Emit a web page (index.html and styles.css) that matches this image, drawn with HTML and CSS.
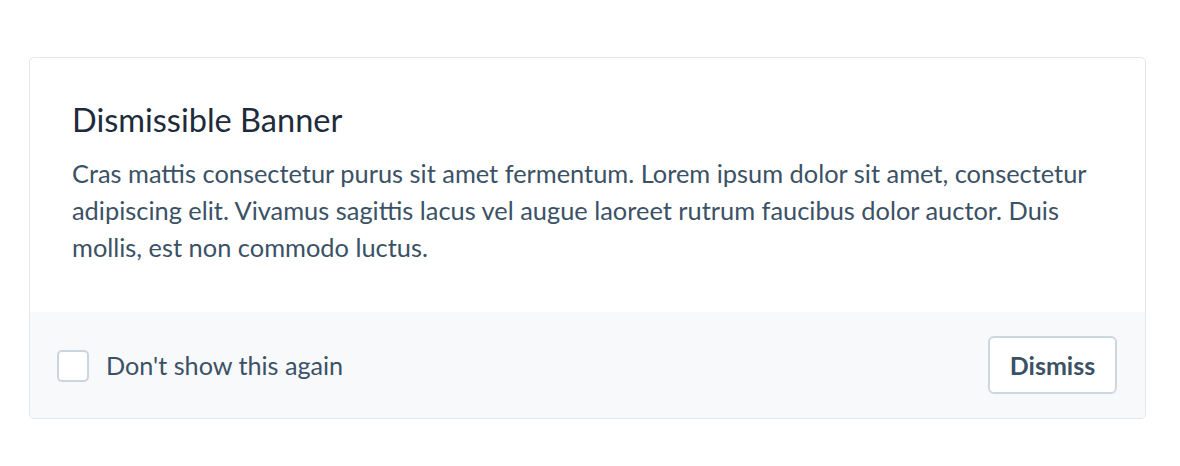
FILE: index.html
```html
<!DOCTYPE html>
<html>
<head>
<meta charset="utf-8">
<link rel="stylesheet" href="styles.css">
</head>
<body>
<div class="banner">
  <div class="banner-body">
    <h2 class="banner-title">Dismissible Banner</h2>
    <p class="banner-text">Cras mattis consectetur purus sit amet fermentum. Lorem ipsum dolor sit amet, consectetur adipiscing elit. Vivamus sagittis lacus vel augue laoreet rutrum faucibus dolor auctor. Duis mollis, est non commodo luctus.</p>
  </div>
  <div class="banner-footer">
    <label class="check">
      <span class="check-box"></span>
      <span class="check-label">Don't show this again</span>
    </label>
    <button class="btn">Dismiss</button>
  </div>
</div>
</body>
</html>
```

FILE: styles.css
```css
html, body {
  margin: 0;
  background: #ffffff;
}
body {
  padding: 57px 34px 0 29px;
  font-family: Lato, "Noto Sans", sans-serif;
}
.banner {
  border: 1px solid #e2e7eb;
  border-radius: 5px;
  overflow: hidden;
  background: #ffffff;
}
.banner-body {
  padding: 42px 43px 46px 42px;
}
.banner-title {
  margin: 0 0 15px 0;
  font-size: 32.5px;
  font-weight: 400;
  line-height: 40px;
  color: #1d2b3a;
}
.banner-text {
  margin: 0;
  font-size: 25.4px;
  line-height: 37px;
  color: #3b5166;
}
.banner-footer {
  background: #f7f9fb;
  display: flex;
  align-items: center;
  justify-content: space-between;
  padding: 24px 28px 24px 27px;
}
.check {
  display: flex;
  align-items: center;
  gap: 17px;
}
.check-box {
  width: 28px;
  height: 28px;
  margin-top: 2px;
  border: 2px solid #cad5de;
  border-radius: 5px;
  background: #ffffff;
}
.check-label {
  font-size: 25.2px;
  color: #3b5166;
}
.btn {
  font-family: Lato, "Noto Sans", sans-serif;
  font-size: 25px;
  font-weight: 700;
  color: #3b5166;
  background: #ffffff;
  border: 2px solid #cdd7e0;
  border-radius: 6px;
  width: 129px;
  height: 58px;
  padding: 0;
}
```
